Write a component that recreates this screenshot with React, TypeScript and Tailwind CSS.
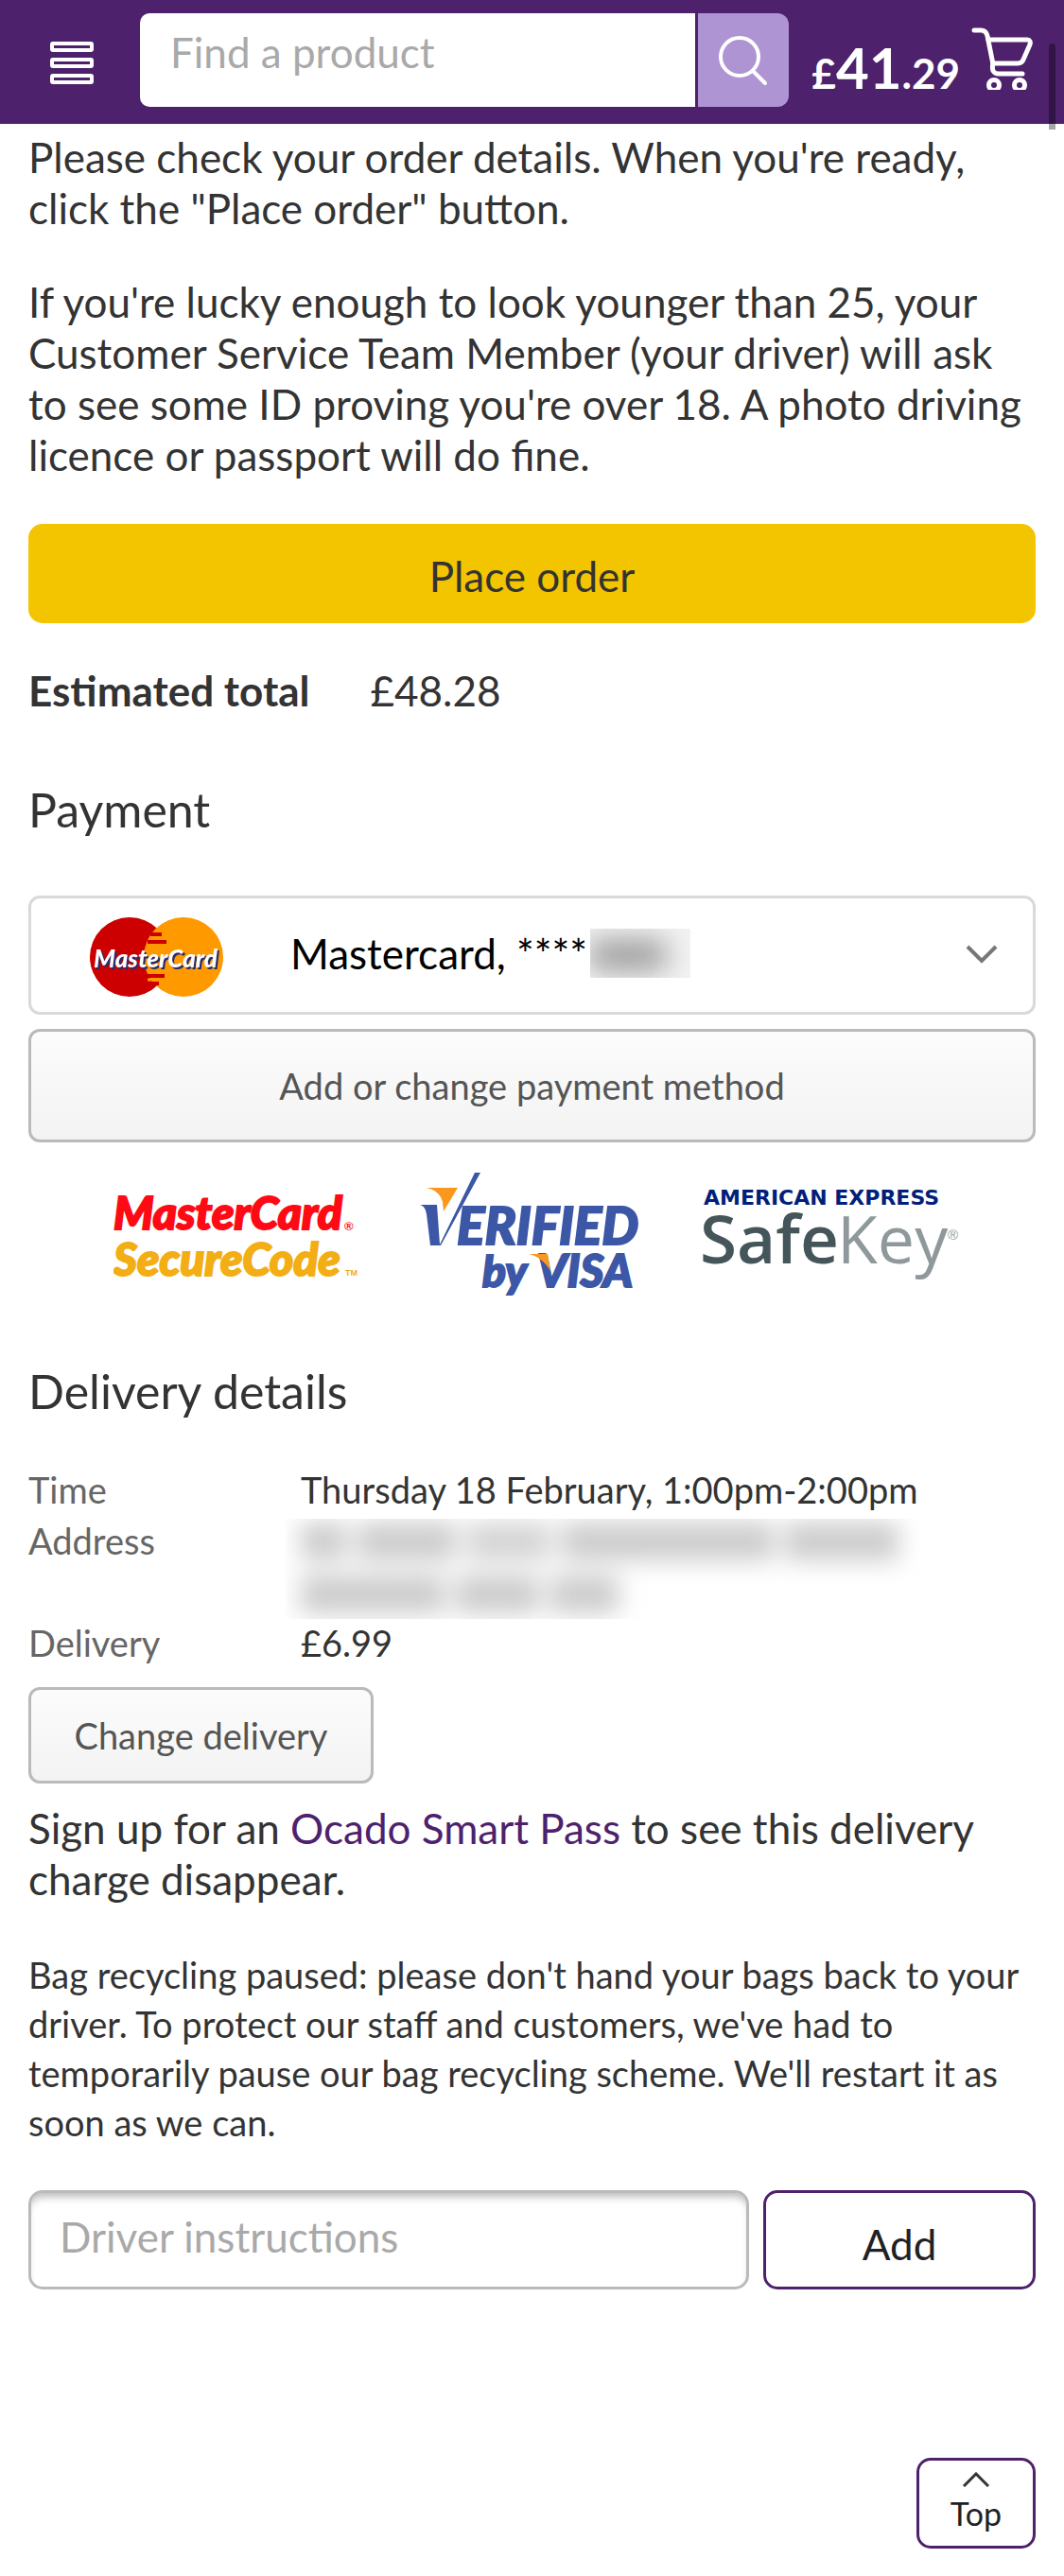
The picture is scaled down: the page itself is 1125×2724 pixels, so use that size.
type DetailRow = {
  label: string;
  value: string | null;
};

const details: DetailRow[] = [
  { label: "Time", value: "Thursday 18 February, 1:00pm-2:00pm" },
  { label: "Address", value: null },
  { label: "Delivery", value: "£6.99" },
];

function MenuIcon() {
  return (
    <svg className="h-[45px] w-[46px]" viewBox="0 0 46 45" fill="none" stroke="#fff" strokeWidth="4">
      {[0, 17, 34].map((y) => (
        <rect key={y} x="2" y={y + 2} width="42" height="7" rx="1" />
      ))}
    </svg>
  );
}

function SearchIcon() {
  return (
    <svg className="h-[54px] w-[54px]" viewBox="0 0 54 54" fill="none" stroke="#fff" strokeWidth="4" strokeLinecap="round">
      <circle cx="23" cy="23" r="20" />
      <path d="M37 38l13 13" />
    </svg>
  );
}

function CartIcon() {
  return (
    <svg className="h-[66px] w-[66px]" viewBox="0 0 66 66" fill="none" stroke="#fff" strokeWidth="5" strokeLinecap="round" strokeLinejoin="round">
      <path d="M3 3h7c4 0 6 2 7 6l6 30" />
      <path d="M18 13h41c3 0 4 2 3 5l-7 16c-1 3-3 4-6 4H23c-2 8 1 11 6 11h25" />
      <circle cx="24" cy="61" r="5.5" />
      <circle cx="51" cy="61" r="5.5" />
    </svg>
  );
}

function MastercardLogo() {
  return (
    <svg className="mt-1 h-[84px] w-[141px] shrink-0" viewBox="0 0 141 84" role="img" aria-label="MasterCard">
      <circle cx="42" cy="42" r="42" fill="#c00" />
      <circle cx="99" cy="42" r="42" fill="#f90" />
      <path d="M64 18h12M61 26h20M59 62h20M64 70h9" stroke="#c00" strokeWidth="4" />
      <path d="M66 22h13M60 31h21M61 66h12" stroke="#f90" strokeWidth="3" />
      <text
        x="4"
        y="53"
        className="drop-shadow-[2px_2px_0_#2b2b6b]"
        fontFamily="Lato, sans-serif"
        fontWeight="900"
        fontStyle="italic"
        fontSize="26"
        fill="#fff"
      >
        MasterCard
      </text>
    </svg>
  );
}

function SecureCodeLogo() {
  return (
    <svg className="h-[136px] w-[258px]" viewBox="0 0 258 136" fontFamily="Lato, sans-serif" fontWeight="900" role="img" aria-label="MasterCard SecureCode">
      <g fontStyle="italic" fontSize="48" strokeWidth="2">
        <text x="0" y="62" fill="#ff0a14" stroke="#ff0a14">
          MasterCard
        </text>
        <text x="0" y="111" fill="#f2ae14" stroke="#f2ae14">
          SecureCode
        </text>
      </g>
      <text x="244" y="63" fontFamily="'Liberation Sans', sans-serif" fontSize="13" fill="#ff0a14">
        ®
      </text>
      <text x="245" y="111" fontFamily="'Liberation Sans', sans-serif" fontSize="9" fill="#f2ae14">
        TM
      </text>
    </svg>
  );
}

function VerifiedByVisaLogo() {
  return (
    <svg className="h-[136px] w-[236px]" viewBox="0 0 236 136" fontFamily="Lato, sans-serif" fontWeight="900" fontStyle="italic" fill="#3b57a6" role="img" aria-label="Verified by Visa">
      <path d="M2 36h18l3 42L60 2h6L24 79H13L9 46c-1-6-3-9-7-10z" />
      <path d="M9 18h33L27 43l-1-10C24 25 18 20 9 18z" fill="#f9981d" />
      <g stroke="#3b57a6" strokeWidth="2">
        <text x="41" y="78" fontSize="55">
          ERIFIED
        </text>
        <text x="68" y="123" fontSize="46">
          by
        </text>
        <text x="126" y="123" fontSize="48">
          VISA
        </text>
      </g>
      <path d="M117 88h20l3 18c-5-9-13-16-23-18z" fill="#f9981d" />
    </svg>
  );
}

function SafeKeyLogo() {
  return (
    <svg className="h-[136px] w-[273px]" viewBox="0 0 273 136" fontFamily="'Open Sans', sans-serif" role="img" aria-label="American Express SafeKey">
      <text x="2" y="36" fontFamily="'DejaVu Sans', sans-serif" fontWeight="700" fontSize="22" fill="#00207a">
        AMERICAN EXPRESS
      </text>
      <text x="-2" y="98" fontSize="71" fontWeight="600" fill="#45565b">
        Safe
      </text>
      <text x="143" y="98" fontSize="70" fill="#8f999c">
        Key
      </text>
      <text x="260" y="73" fontFamily="'Liberation Sans', sans-serif" fontSize="15" fill="#8f999c">
        ®
      </text>
    </svg>
  );
}

// Address is hidden behind a soft smudge, one block per word
function HiddenAddress() {
  return (
    <div className="-ml-4 mt-1 h-[106px] max-w-[700px] overflow-hidden" role="img" aria-label="Address hidden">
      <div className="space-y-4 pl-4 pt-1 blur-[13px]">
        <div className="flex gap-3">
          <span className="h-10 w-12 bg-[#ccc]" />
          <span className="h-10 w-26 bg-[#ccc]" />
          <span className="h-10 w-22 bg-[#d4d4d4]" />
          <span className="h-10 w-56 bg-[#ccc]" />
          <span className="h-10 w-30 bg-[#ccc]" />
        </div>
        <div className="flex gap-3">
          <span className="h-10 w-38 bg-[#ccc]" />
          <span className="h-10 w-22 bg-[#ccc]" />
          <span className="h-10 w-18 bg-[#ccc]" />
        </div>
      </div>
    </div>
  );
}

function Header() {
  return (
    <header className="flex h-[131px] items-start bg-[#4e216d] pr-8">
      <button type="button" aria-label="Menu" className="mt-11 px-[53px]">
        <MenuIcon />
      </button>
      <form className="-ml-1 mt-[14px] flex h-[99px] flex-1 gap-[3px]">
        <input
          type="search"
          aria-label="Find a product"
          placeholder="Find a product"
          className="min-w-0 flex-1 rounded-l-[10px] bg-white pb-[18px] pl-8 placeholder:text-[#a9a9a9]"
        />
        <button type="button" aria-label="Search" className="flex w-24 items-center justify-center rounded-r-[12px] bg-[#ae94d2]">
          <SearchIcon />
        </button>
      </form>
      <a href="#trolley" aria-label="Trolley £41.29" className="ml-6 mt-[29px] flex h-[66px] items-end gap-3 font-bold text-white">
        <span className="leading-[36px]">
          £<span className="text-[60px]">41</span>.29
        </span>
        <CartIcon />
      </a>
    </header>
  );
}

export default function App() {
  return (
    <div className="relative bg-white font-[Lato,sans-serif] text-[44px] leading-[54px] text-[#333]">
      <Header />
      <div className="absolute right-[9px] top-[46px] h-[91px] w-[7px] rounded-t-full bg-black/35" />

      <main className="flex flex-col px-[30px] pb-7 pt-2">
        <p>Please check your order details. When you're ready, click the "Place order" button.</p>
        <p className="mt-[45px]">
          If you're lucky enough to look younger than 25, your Customer Service Team Member (your driver) will ask to see
          some ID proving you're over 18. A photo driving licence or passport will do fine.
        </p>
        <button type="button" className="mt-[46px] h-[105px] rounded-[15px] bg-[#f2c500] pt-1">
          Place order
        </button>
        <p className="mt-11 flex gap-16">
          <strong>Estimated total</strong>
          <span>£48.28</span>
        </p>

        <h2 className="mt-[69px] text-[50px] leading-[60px]">Payment</h2>
        <div className="relative mt-[61px] flex h-[126px] items-center rounded-[12px] border-3 border-[#d9d9d9] pl-[62px] text-black">
          <MastercardLogo />
          <select aria-label="Payment card" className="h-full flex-1 appearance-none bg-transparent pb-1 pl-[71px]">
            <option>Mastercard, ****</option>
          </select>
          <span className="absolute left-[591px] top-8 h-[52px] w-[106px] overflow-hidden bg-[#f3f3f3]">
            <span className="mt-3 block h-8 w-20 bg-[#999] blur-[15px]" />
          </span>
          <svg className="pointer-events-none absolute right-[37px] top-[49px] h-5 w-[34px]" viewBox="0 0 34 20" fill="none" stroke="#777" strokeWidth="4">
            <path d="M2 2l15 15L32 2" />
          </svg>
        </div>
        <button
          type="button"
          className="mt-[15px] h-[120px] rounded-[12px] border-3 border-[#bababa] bg-linear-to-b from-[#fcfcfc] to-[#f3f3f3] text-[38px] text-[#555]"
        >
          Add or change payment method
        </button>
        <div className="mt-[30px] flex justify-center gap-16 pl-[10px]">
          <SecureCodeLogo />
          <VerifiedByVisaLogo />
          <SafeKeyLogo />
        </div>

        <h2 className="mt-[67px] text-[50px] leading-[60px]">Delivery details</h2>
        <dl className="mt-[47px] text-[38px]">
          {details.map((row) => (
            <div key={row.label} className="grid grid-cols-[288px_1fr]">
              <dt className="text-[#666]">{row.label}</dt>
              <dd className={row.value ? "" : "h-[108px]"}>{row.value ?? <HiddenAddress />}</dd>
            </div>
          ))}
        </dl>
        <button
          type="button"
          className="mt-5 h-[102px] w-[365px] rounded-[12px] border-3 border-[#bababa] bg-linear-to-b from-[#fcfcfc] to-[#f3f3f3] text-[38px] text-[#555]"
        >
          Change delivery
        </button>
        <p className="mt-5">
          Sign up for an{" "}
          <a href="#smart-pass" className="text-[#4e216d]">
            Ocado Smart Pass
          </a>{" "}
          to see this delivery charge disappear.
        </p>
        <p className="mt-12 text-[38px] leading-[52px]">
          Bag recycling paused: please don't hand your bags back to your driver. To protect our staff and customers, we've
          had to temporarily pause our bag recycling scheme. We'll restart it as soon as we can.
        </p>

        <form className="mt-[46px] flex h-[105px] gap-[15px]">
          <input
            type="text"
            aria-label="Driver instructions"
            placeholder="Driver instructions"
            className="min-w-0 flex-1 rounded-[15px] border-3 border-[#bababa] pb-2 pl-[30px] shadow-[inset_0_8px_8px_-4px_#bbb] placeholder:text-[#a9a9a9]"
          />
          <button type="button" className="w-72 rounded-[15px] border-3 border-[#4e216d] pt-2 text-[#1f2225]">
            Add
          </button>
        </form>

        <a
          href="#top"
          className="mt-[178px] flex h-24 w-[126px] flex-col items-center self-end rounded-[15px] border-3 border-[#4e216d] pt-3 text-[34px] leading-[56px] text-[#1f2225]"
        >
          <svg className="h-4 w-7 shrink-0" viewBox="0 0 28 16" fill="none" stroke="#333" strokeWidth="3">
            <path d="M1 15L14 2l13 13" />
          </svg>
          Top
        </a>
      </main>
    </div>
  );
}
